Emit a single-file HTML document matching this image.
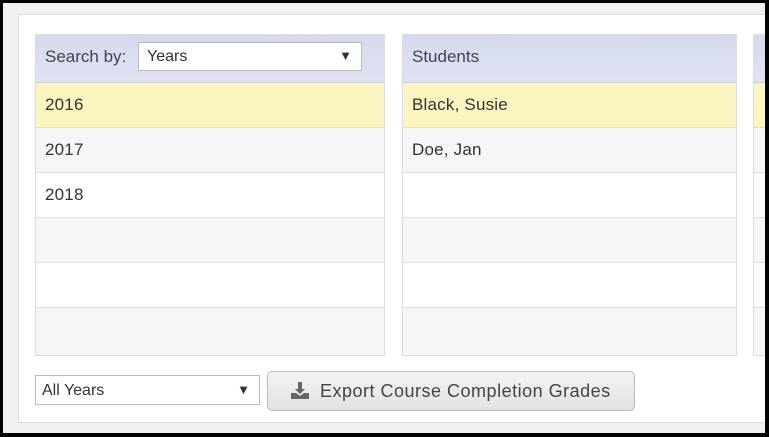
<!DOCTYPE html>
<html><head><style>
*{box-sizing:border-box;margin:0;padding:0}
body{width:769px;height:437px;overflow:hidden;background:#000;font-family:"Liberation Sans",sans-serif;color:#333;position:relative}
.outer{position:absolute;left:3px;top:3px;width:762px;height:430px;background:#f0f0f0;overflow:hidden}
.panel{position:absolute;left:18px;top:14px;width:760px;height:409px;background:#fff;border:1px solid #dcdcdc}
.col{position:absolute;top:34px;height:322px;border:1px solid #ddd;background:#f6f6f6}
.hd{height:48px;background:linear-gradient(#d4d9ee,#dfe3f3);border-bottom:1px solid #d0d0d0;font-size:17px;padding:12px 9px;color:#444}
.row{height:45px;border-bottom:1px solid #ddd;font-size:17px;padding:12px 9px;color:#333;letter-spacing:.2px}
.sel{background:#fdf5bf}
.w{background:#fff}
.box{position:absolute;background:#fff;border:1px solid #bbb;font-size:16px;color:#333}
.btn{position:absolute;left:267px;top:371px;width:368px;height:40px;border:1px solid #bbb;border-radius:5px;background:linear-gradient(#f3f3f3,#e2e2e2);font-size:18px;color:#444;padding:9px 0 0 52px;letter-spacing:.5px}
</style></head><body>
<div class="outer"></div>
<div class="panel" style="border-right:none"></div>
<div class="col" style="left:35px;width:350px">
<div class="hd">Search by:</div>
<div class="row sel">2016</div>
<div class="row">2017</div>
<div class="row w">2018</div>
<div class="row"></div>
<div class="row w"></div>
<div class="row" style="border:none"></div>
</div>
<div class="box" style="left:138px;top:42px;width:224px;height:29px;padding:5px 8px">Years<span style="position:absolute;right:9px;top:5px;font-size:13px">▼</span></div>
<div class="col" style="left:402px;width:335px">
<div class="hd">Students</div>
<div class="row sel">Black, Susie</div>
<div class="row">Doe, Jan</div>
<div class="row w"></div>
<div class="row"></div>
<div class="row w"></div>
<div class="row" style="border:none"></div>
</div>
<div class="col" style="left:753px;width:40px">
<div class="hd"></div>
<div class="row sel"></div>
<div class="row"></div>
<div class="row w"></div>
<div class="row"></div>
<div class="row w"></div>
</div>
<div style="position:absolute;left:765px;top:0;width:4px;height:437px;background:#000"></div>
<div class="box" style="left:35px;top:375px;width:225px;height:30px;padding:6px 6px;font-size:16px">All Years<span style="position:absolute;right:9px;top:6px;font-size:13px">▼</span></div>
<div class="btn"><svg style="position:absolute;left:22px;top:10px" width="20" height="18" viewBox="0 0 20 18"><path d="M8 0h4v7h3l-5 5-5-5h3z" fill="#666"/><path d="M1 11h5l4 3 4-3h5v6H1z" fill="#666"/></svg>Export Course Completion Grades</div>
</body></html>
